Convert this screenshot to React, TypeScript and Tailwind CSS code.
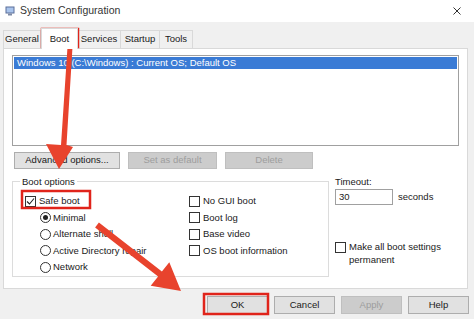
import React from "react";

const Check = ({ checked = false }: { checked?: boolean }) => (
  <span className="w-[11px] h-[11px] border border-[#333] bg-white flex items-center justify-center shrink-0">
    {checked && (
      <svg width="9" height="9" viewBox="0 0 9 9">
        <path d="M1 4.5 L3.5 7 L8 1.5" fill="none" stroke="#222" strokeWidth="1.1" />
      </svg>
    )}
  </span>
);

const Radio = ({ checked = false }: { checked?: boolean }) => (
  <span className="w-[11px] h-[11px] rounded-full border border-[#333] bg-white flex items-center justify-center shrink-0">
    {checked && <span className="w-[5px] h-[5px] rounded-full bg-[#222]" />}
  </span>
);

const Btn = ({ label, disabled = false, w }: { label: string; disabled?: boolean; w: string }) => (
  <div
    className={`${w} h-full flex items-center justify-center border ${
      disabled ? "bg-[#cccccc] border-[#bfbfbf] text-[#9d9d9d]" : "bg-[#e1e1e1] border-[#adadad] text-[#1a1a1a]"
    }`}
  >
    {label}
  </div>
);

const tabs = [
  { name: "General", w: "w-[38px]" },
  { name: "Boot", w: "w-[37px]" },
  { name: "Services", w: "w-[44px]" },
  { name: "Startup", w: "w-[40px]" },
  { name: "Tools", w: "w-[34px]" },
];

export default function App() {
  return (
    <div className="relative w-[474px] h-[319px] overflow-hidden bg-[#f0f0f0] text-[9.5px] text-[#1a1a1a] font-['Liberation_Sans',Arial,sans-serif]">
      {/* title bar */}
      <div className="h-[22px] bg-white flex items-center pl-[5px] pr-[13px]">
        <svg width="10" height="10" viewBox="0 0 10 10">
          <rect x="0.5" y="0.5" width="9" height="7" fill="#5b6f9a" />
          <rect x="1.5" y="1.5" width="7" height="5" fill="#a9c4ec" />
          <rect x="3" y="7.5" width="4" height="2" fill="#7d8aa6" />
        </svg>
        <span className="ml-[5px] text-[10.5px] text-[#333]">System Configuration</span>
        <svg className="ml-auto" width="8" height="8" viewBox="0 0 8 8">
          <path d="M0.5 0.5 L7.5 7.5 M7.5 0.5 L0.5 7.5" stroke="#333" strokeWidth="1" />
        </svg>
      </div>

      {/* tabs */}
      <div className="flex items-end h-[26px] pl-[3px]">
        {tabs.map((t) =>
          t.name === "Boot" ? (
            <div
              key={t.name}
              className={`${t.w} h-[21px] -mb-px relative z-10 bg-white border border-b-0 border-[#d9d9d9] flex items-center justify-center`}
            >
              {t.name}
            </div>
          ) : (
            <div
              key={t.name}
              className={`${t.w} h-[18px] bg-[#f0f0f0] border border-b-0 border-[#d9d9d9] -ml-px first:ml-0 flex items-center justify-center`}
            >
              {t.name}
            </div>
          )
        )}
      </div>

      {/* panel */}
      <div className="ml-[3px] w-[465px] h-[241px] bg-white border border-[#d9d9d9] pl-[8px] pt-[6px]">
        <div className="w-[447px] h-[91px] border border-[#a0a0a0] p-px">
          <div className="h-[12px] bg-[#3a7bd5] text-white flex items-center pl-[3px] leading-none">
            Windows 10 (C:\Windows) : Current OS; Default OS
          </div>
        </div>

        <div className="flex gap-[8px] h-[17px] mt-[6px] ml-[2px]">
          <Btn label="Advanced options..." w="w-[106px]" />
          <Btn label="Set as default" w="w-[89px]" disabled />
          <Btn label="Delete" w="w-[88px]" disabled />
        </div>

        <div className="flex mt-[7px]">
          <fieldset className="w-[317px] h-[101px] border border-[#dcdcdc] px-[12px]">
            <legend className="ml-[-5px] px-[2px] leading-[11px]">Boot options</legend>
            <div className="flex mt-[6px]">
              <div className="w-[164px] flex flex-col">
                <label className="h-[16.5px] flex items-center gap-[3px]">
                  <Check checked />
                  <span>Safe boot</span>
                </label>
                {[
                  { n: "Minimal", c: true },
                  { n: "Alternate shell" },
                  { n: "Active Directory repair" },
                  { n: "Network" },
                ].map((r) => (
                  <label key={r.n} className="h-[16.5px] flex items-center gap-[2px] pl-[15px]">
                    <Radio checked={r.c} />
                    <span>{r.n}</span>
                  </label>
                ))}
              </div>
              <div className="flex flex-col">
                {["No GUI boot", "Boot log", "Base video", "OS boot information"].map((n) => (
                  <label key={n} className="h-[16.5px] flex items-center gap-[3px]">
                    <Check />
                    <span>{n}</span>
                  </label>
                ))}
              </div>
            </div>
          </fieldset>

          <div className="ml-[6px] flex flex-col">
            <span className="leading-[11px]">Timeout:</span>
            <div className="flex items-center mt-[2px]">
              <div className="w-[58px] h-[16px] border border-[#a0a0a0] bg-white flex items-center pl-[3px]">30</div>
              <span className="ml-[5px]">seconds</span>
            </div>
            <label className="flex items-start gap-[3px] mt-[37px]">
              <Check />
              <span className="leading-[12.5px] -mt-px">
                Make all boot settings
                <br />
                permanent
              </span>
            </label>
          </div>
        </div>
      </div>

      {/* dialog buttons */}
      <div className="flex justify-end gap-[6px] h-[18px] mt-[7px] pr-[5px]">
        <Btn label="OK" w="w-[61px]" />
        <Btn label="Cancel" w="w-[61px]" />
        <Btn label="Apply" w="w-[61px]" disabled />
        <Btn label="Help" w="w-[61px]" />
      </div>

      {/* annotations */}
      <svg className="absolute inset-0 pointer-events-none" width="474" height="319" viewBox="0 0 474 319">
        <rect x="42" y="29" width="36" height="18" fill="none" stroke="#e0241b" strokeWidth="2.5" />
        <rect x="22" y="191" width="68" height="17" fill="none" stroke="#e0241b" strokeWidth="2.5" />
        <rect x="204" y="294" width="64" height="20" fill="none" stroke="#e0241b" strokeWidth="2.5" />
        <polygon points="67.5,47 72.5,47 66.5,145 73,147 59,169 46,144 61,145" fill="#e8432d" />
        <polygon points="98.9,222.6 161.9,271.6 169.3,262.2 181,291 150.7,285.8 158.1,276.4 95.1,227.4" fill="#e8432d" />
      </svg>
    </div>
  );
}
